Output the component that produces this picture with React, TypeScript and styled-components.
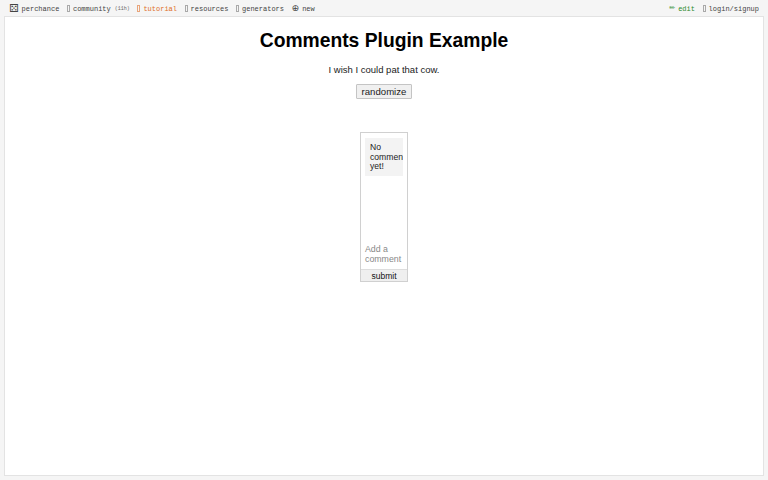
import { createGlobalStyle } from "styled-components";
import styled from "styled-components";

const GlobalStyle = createGlobalStyle`
  html, body {
    margin: 0;
    padding: 0;
    height: 100%;
    background: #f5f5f5;
    overflow: hidden;
  }
  #root {
    height: 100%;
  }
`;

const Page = styled.div`
  display: flex;
  flex-direction: column;
  width: 768px;
  height: 480px;
  box-sizing: border-box;
  padding: 0 4px 4px;
  background: #f5f5f5;
`;

const TopBar = styled.nav`
  display: flex;
  justify-content: space-between;
  align-items: center;
  height: 16px;
  box-sizing: border-box;
  padding: 1px 5px 0;
  font-family: "Liberation Mono", monospace;
  font-size: 7px;
  color: #444;
  opacity: 0.999;
`;

const NavGroup = styled.div`
  display: flex;
  align-items: center;
  gap: 7.6px;
`;

const NavLink = styled.a<{ $color?: string }>`
  display: flex;
  align-items: center;
  gap: 3px;
  color: ${(p) => p.$color || "#444"};
  white-space: nowrap;
`;

const NavIcon = styled.span<{ $size?: number }>`
  font-family: "DejaVu Sans", sans-serif;
  font-size: ${(p) => p.$size || 7}px;
  line-height: 1;
`;

// the reference shows an empty box where its emoji font is missing
const MissingGlyph = styled.span<{ $color?: string }>`
  display: block;
  width: 3px;
  height: 7px;
  box-sizing: border-box;
  border: 1px solid ${(p) => p.$color || "#777"};
  opacity: 0.6;
`;

const Small = styled.span`
  font-size: 5px;
  color: #666;
  margin-left: 1px;
`;

const Content = styled.main`
  flex: 1;
  display: flex;
  flex-direction: column;
  align-items: center;
  background: #fff;
  border: 1px solid #e3e3e3;
  font-family: "Liberation Sans", Arial, sans-serif;
  color: #000;
  opacity: 0.999;
`;

const Title = styled.h1`
  margin: 12px 0 0;
  font-size: 19.3px;
  line-height: 24px;
  font-weight: 700;
`;

const Sentence = styled.p`
  margin: 11px 0 0;
  font-size: 9.5px;
  line-height: 12px;
  color: #222;
`;

const RandomButton = styled.button`
  margin-top: 8px;
  width: 56px;
  height: 15px;
  padding: 0;
  background: #f0f0f0;
  border: 1px solid #c4c4c4;
  border-radius: 1px;
  font-family: "Liberation Sans", Arial, sans-serif;
  font-size: 9.6px;
  color: #222;
`;

const CommentsBox = styled.section`
  display: flex;
  flex-direction: column;
  width: 48px;
  height: 150px;
  margin-top: 33px;
  box-sizing: border-box;
  border: 1px solid #d0d0d0;
  overflow: hidden;
`;

const Feed = styled.div`
  flex: 1;
  padding: 5px 4px 0;
`;

const EmptyNote = styled.div`
  padding: 5px 0 4px 5px;
  background: #f3f3f3;
  font-size: 8.6px;
  line-height: 9.5px;
  color: #222;
  overflow: hidden;
`;

const CommentInput = styled.div`
  padding: 0 4px 5px;
  font-size: 8.8px;
  line-height: 9.5px;
  color: #888;
`;

const SubmitButton = styled.button`
  height: 12px;
  padding: 0;
  background: #efefef;
  border: none;
  border-top: 1px solid #ddd;
  font-family: "Liberation Sans", Arial, sans-serif;
  font-size: 8.5px;
  line-height: 10px;
  color: #111;
`;

export default function App() {
  return (
    <Page>
      <GlobalStyle />
      <TopBar>
        <NavGroup>
          <NavLink>
            <NavIcon $size={11}>⚄</NavIcon> perchance
          </NavLink>
          <NavLink>
            <MissingGlyph /> community<Small>(11h)</Small>
          </NavLink>
          <NavLink $color="#e0702a">
            <MissingGlyph $color="#e0702a" /> tutorial
          </NavLink>
          <NavLink>
            <MissingGlyph /> resources
          </NavLink>
          <NavLink>
            <MissingGlyph /> generators
          </NavLink>
          <NavLink>
            <NavIcon $size={9}>⊕</NavIcon> new
          </NavLink>
        </NavGroup>
        <NavGroup>
          <NavLink $color="#2a8a2a">
            <NavIcon>✏</NavIcon> edit
          </NavLink>
          <NavLink>
            <MissingGlyph /> login/signup
          </NavLink>
        </NavGroup>
      </TopBar>
      <Content>
        <Title>Comments Plugin Example</Title>
        <Sentence>I wish I could pat that cow.</Sentence>
        <RandomButton>randomize</RandomButton>
        <CommentsBox>
          <Feed>
            <EmptyNote>No comments yet!</EmptyNote>
          </Feed>
          <CommentInput>Add a comment</CommentInput>
          <SubmitButton>submit</SubmitButton>
        </CommentsBox>
      </Content>
    </Page>
  );
}
